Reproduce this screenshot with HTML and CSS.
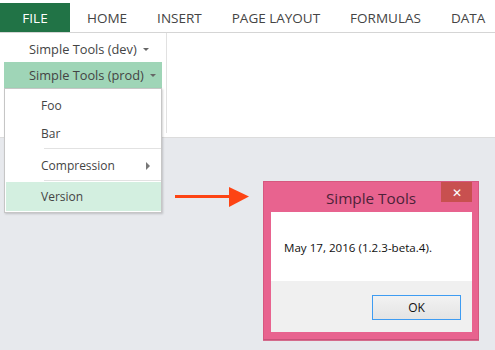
FILE: index.html
```html
<!DOCTYPE html>
<html>
<head>
<meta charset="utf-8">
<link rel="stylesheet" href="styles.css">
</head>
<body>
<div class="screen">
  <div class="tabs">
    <div class="tab-file">FILE</div>
    <div class="tab first">HOME</div>
    <div class="tab">INSERT</div>
    <div class="tab">PAGE LAYOUT</div>
    <div class="tab">FORMULAS</div>
    <div class="tab">DATA</div>
  </div>
  <div class="ribbon">
    <div class="group">
      <div class="rbtn">Simple Tools (dev)<span class="caret"></span></div>
      <div class="rbtn active">Simple Tools (prod)<span class="caret"></span></div>
    </div>
  </div>

  <div class="menu">
    <div class="item">Foo</div>
    <div class="item">Bar</div>
    <div class="sep"></div>
    <div class="item sub">Compression<span class="subarrow"></span></div>
    <div class="sep"></div>
    <div class="item hover">Version</div>
  </div>

  <svg class="arrow" width="84" height="26" viewBox="0 0 84 26">
    <rect x="5" y="10" width="56" height="3" fill="#fd4414"/>
    <polygon points="59,2 79,11.5 59,22" fill="#fd4414"/>
  </svg>

  <div class="dialog">
    <div class="titlebar">
      <span class="title">Simple Tools</span>
      <div class="close">&#x2715;</div>
    </div>
    <div class="client">
      <div class="message">May 17, 2016 (1.2.3-beta.4).</div>
      <div class="footer">
        <div class="okbtn">OK</div>
      </div>
    </div>
  </div>
</div>
</body>
</html>
```
FILE: styles.css
```css
html, body {
  margin: 0;
  padding: 0;
}
body {
  background: #e7e9ed;
  font-family: "Open Sans", "Noto Sans", sans-serif;
}
.screen {
  position: relative;
  width: 495px;
  height: 350px;
  overflow: hidden;
}
.tabs {
  display: flex;
  height: 32px;
  background: #fff;
  border-bottom: 1px solid #d5d5d5;
  overflow: hidden;
}
.tab-file {
  flex-shrink: 0;
  margin-top: 3px;
  width: 70px;
  background: #217346;
  color: #fff;
  font-size: 13.5px;
  display: flex;
  align-items: center;
  justify-content: center;
}
.tab {
  flex-shrink: 0;
  padding: 0 15px;
  display: flex;
  align-items: center;
  padding-top: 3px;
  color: #444;
  font-size: 13.5px;
  white-space: nowrap;
}
.tab.first {
  margin-left: 2px;
}
.ribbon {
  height: 104px;
  background: #fff;
  border-bottom: 1px solid #dcdcdc;
  display: flex;
}
.group {
  width: 166px;
  height: 97px;
  padding-top: 3px;
  border-right: 1px solid #e1e1e1;
}
.rbtn {
  margin-left: 4px;
  width: 133px;
  height: 26px;
  padding-left: 25px;
  display: flex;
  align-items: center;
  font-size: 12.8px;
  color: #444;
  white-space: nowrap;
}
.rbtn.active {
  background: #9fd5b7;
}
.caret {
  display: inline-block;
  margin-left: 6px;
  width: 0;
  height: 0;
  border-left: 3px solid transparent;
  border-right: 3px solid transparent;
  border-top: 3px solid #666;
}
.menu {
  position: absolute;
  left: 4px;
  top: 88px;
  width: 156px;
  height: 121px;
  padding-top: 2px;
  background: #fff;
  border: 1px solid #c6c6c6;
  box-shadow: 1px 1px 2px rgba(0,0,0,0.18);
}
.item {
  height: 28px;
  padding-left: 36px;
  display: flex;
  align-items: center;
  font-size: 12px;
  color: #444;
  position: relative;
}
.item.hover {
  height: 29px;
  margin-left: 1px;
  padding-left: 35px;
  background: #d3efe0;
}
.sep {
  height: 1px;
  margin: 1px 0 2px 39px;
  background: #e2e2e2;
}
.sep + .item.hover {
  margin-top: -1px;
}
.subarrow {
  position: absolute;
  left: 141px;
  top: 11px;
  width: 0;
  height: 0;
  border-top: 4px solid transparent;
  border-bottom: 4px solid transparent;
  border-left: 4px solid #777;
}
.arrow {
  position: absolute;
  left: 170px;
  top: 185px;
}
.dialog {
  position: absolute;
  left: 263px;
  top: 181px;
  width: 214px;
  height: 157px;
  background: #e8638f;
  border: 1px solid #d6587f;
  border-bottom-color: #c9527a;
  box-shadow: 0 1px 0 #d36b8c;
}
.titlebar {
  height: 30px;
  position: relative;
  display: flex;
  justify-content: center;
  align-items: center;
}
.title {
  font-size: 15.3px;
  color: #4d2238;
  margin-top: 2px;
}
.close {
  position: absolute;
  left: 177px;
  top: 0;
  width: 31px;
  height: 20px;
  background: #c8504f;
  color: #fff;
  font-size: 12px;
  display: flex;
  align-items: center;
  justify-content: center;
}
.client {
  margin-left: 7px;
  width: 201px;
  background: #fff;
}
.message {
  height: 69px;
  padding-left: 13px;
  display: flex;
  align-items: center;
  font-size: 11.6px;
  color: #111;
  box-sizing: border-box;
  padding-top: 1px;
}
.footer {
  height: 51px;
  background: #f0f0f0;
  display: flex;
  justify-content: flex-end;
  padding-top: 14px;
  padding-right: 11px;
  box-sizing: border-box;
}
.okbtn {
  width: 87px;
  height: 23px;
  border: 1px solid #3e9cf2;
  background: linear-gradient(#f2f2f2, #e4e4e4);
  display: flex;
  align-items: center;
  justify-content: center;
  font-size: 12px;
  color: #111;
}
```
